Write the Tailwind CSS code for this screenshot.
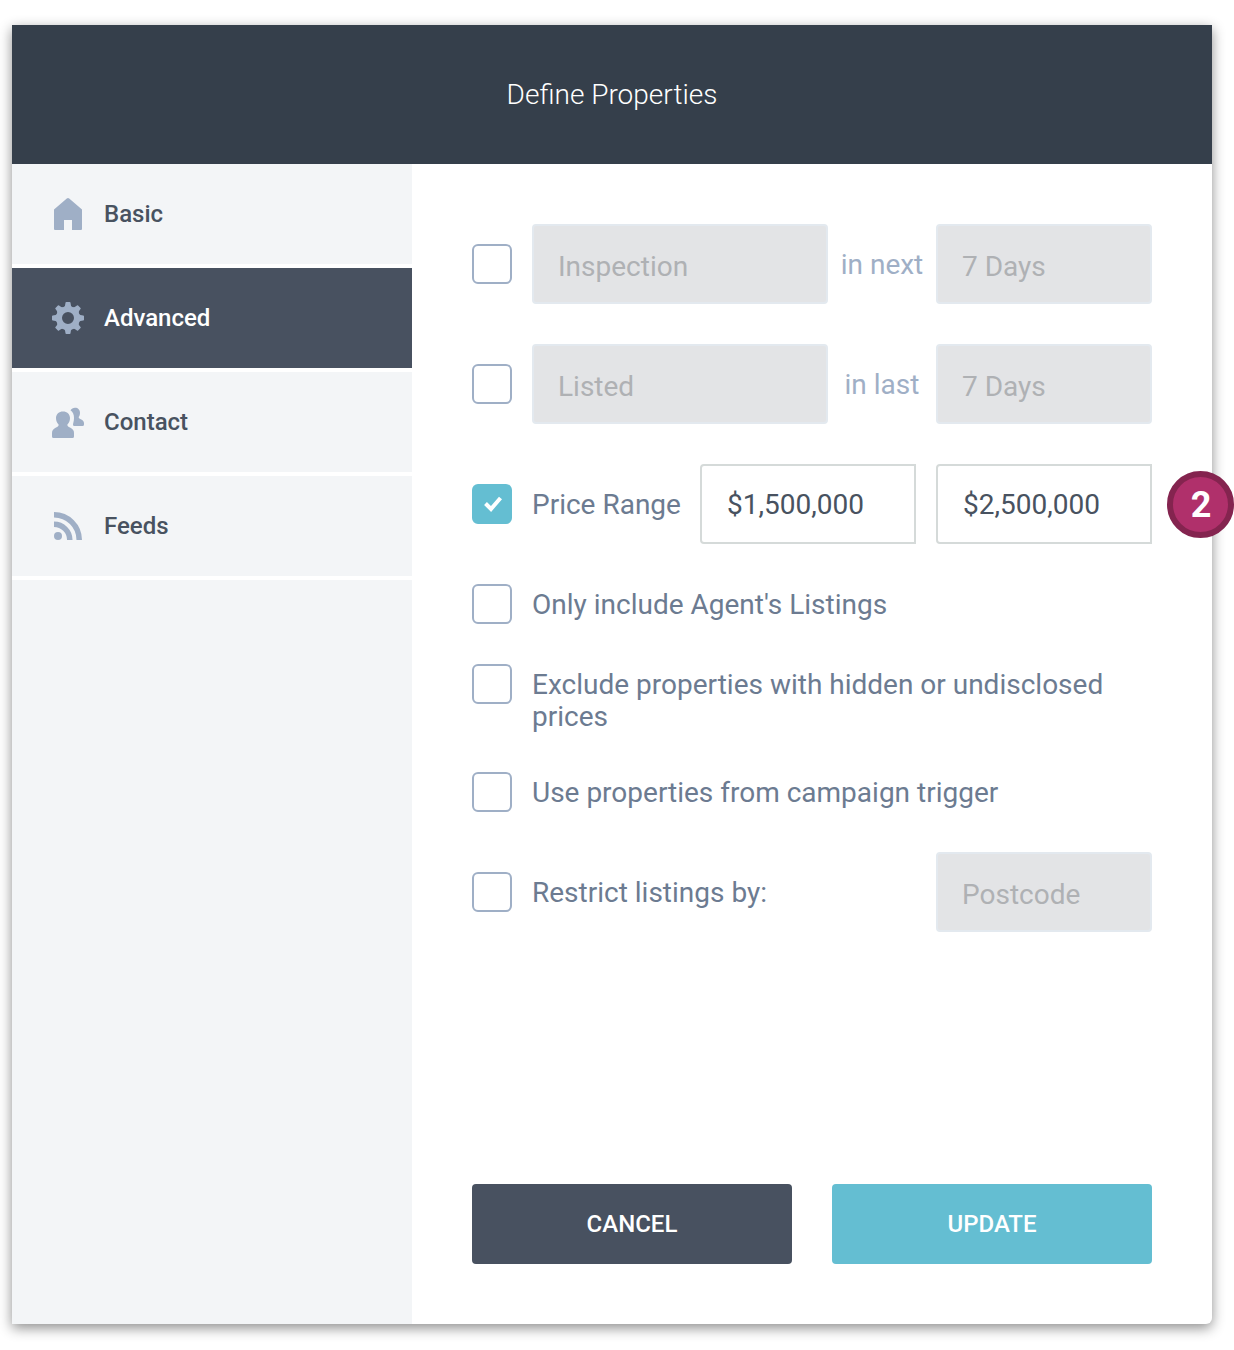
<!DOCTYPE html>
<html lang="en">
<head>
  <meta charset="UTF-8">
  <meta name="viewport" content="width=device-width, initial-scale=1.0">
  <title>Define Properties</title>
  <script src="https://cdn.jsdelivr.net/npm/@tailwindcss/browser@4"></script>
</head>
<body class="bg-white font-['Roboto',sans-serif] antialiased h-[1350px] pl-3 pt-[25px] overflow-hidden">

  <div class="relative w-[1200px] h-[1299px] flex flex-col bg-white rounded-br-md shadow-[0_4px_13px_rgba(0,0,0,0.45)]">
    <header class="h-[139px] shrink-0 bg-[#353f4b] flex items-center justify-center">
      <h1 class="text-[28px] font-light text-white">Define Properties</h1>
    </header>

    <div class="flex flex-1">
      <!-- Sidebar -->
      <nav class="w-[400px] bg-[#f3f5f7] text-2xl font-medium text-[#485260]">
        <a class="h-[104px] border-b-4 border-white flex items-center gap-5 pl-10">
          <svg class="w-8 h-8 text-[#9fafc6]" viewBox="0 0 32 32" fill="currentColor">
            <path d="M16 0Q16.6 0 17.2.6L30 11.5V31Q30 32 29 32H20V22H12V32H3Q2 32 2 31V11.5L14.8.6Q15.4 0 16 0Z"/>
          </svg>
          Basic
        </a>
        <a class="h-[104px] border-b-4 border-white flex items-center gap-5 pl-10 bg-[#485160] text-white">
          <svg class="w-8 h-8 text-[#9fafc6]" viewBox="-16 -16 32 32" fill="none" stroke="currentColor">
            <circle r="9" stroke-width="6"/>
            <g fill="currentColor" stroke="none">
              <path id="tooth" d="M-4.2-10.5Q-2.6-12-2.5-15.2Q-2.5-16-1.7-16H1.7Q2.5-16 2.5-15.2Q2.6-12 4.2-10.5Z"/>
              <use href="#tooth" transform="rotate(45)"/>
              <use href="#tooth" transform="rotate(90)"/>
              <use href="#tooth" transform="rotate(135)"/>
              <use href="#tooth" transform="rotate(180)"/>
              <use href="#tooth" transform="rotate(225)"/>
              <use href="#tooth" transform="rotate(270)"/>
              <use href="#tooth" transform="rotate(315)"/>
            </g>
          </svg>
          Advanced
        </a>
        <a class="h-[104px] border-b-4 border-white flex items-center gap-5 pl-10">
          <svg class="w-8 h-8 text-[#9fafc6]" viewBox="0 0 32 32" fill="currentColor">
            <path d="M11 5.500C15 5.500 18 8.200 18 12C18 15 17 17 15.300 18.700C15.300 20 16.200 20.600 18 21.500C21 23 22 24.500 22 27V30.500Q22 32 20.500 32H1.500Q0 32 0 30.500V27C0 24.500 1 23 4 21.500C5.800 20.600 6.700 20 6.700 18.700C5 17 4 15 4 12C4 8.200 7 5.500 11 5.500Z"/>
            <path d="M18.500 4.300C19.500 2.600 21 1.700 23 1.700C26 1.700 28 3.800 28 6.800C28 8.800 27.500 10 26.700 11C26.700 12.300 27.300 12.600 28.800 13.300C31 14.300 32 15.500 32 17.300V18.500Q32 20 30.500 20H22.300Q21 20 21 18.500C21 17.300 22 15.500 22 12C22 8.600 21 6 18.500 4.300Z"/>
          </svg>
          Contact
        </a>
        <a class="h-[104px] border-b-4 border-white flex items-center gap-5 pl-10">
          <svg class="w-8 h-8 text-[#9fafc6]" viewBox="0 0 32 32" fill="none" stroke="currentColor" stroke-width="5.500">
            <circle cx="6" cy="26" r="4" fill="currentColor" stroke="none"/>
            <path d="M2 14.200A15.800 15.800 0 0 1 17.800 30M2 4.750A25.250 25.250 0 0 1 27.250 30"/>
          </svg>
          Feeds
        </a>
      </nav>

      <!-- Advanced options -->
      <main class="w-[800px] p-[60px] flex flex-col text-[28px] leading-8 text-[#6c7b91]">
        <div class="flex items-center h-20 mb-10">
          <span class="size-10 border-2 border-[#9fafc6] rounded-md mr-5"></span>
          <div class="w-[296px] h-20 border-2 border-[#e3e9ef] rounded bg-[#e3e4e6] text-[#afb1b4] pl-6 pt-1.5 flex items-center">Inspection</div>
          <span class="w-[108px] pt-0.5 text-center text-[#9fafc6]">in next</span>
          <div class="w-[216px] h-20 border-2 border-[#e3e9ef] rounded bg-[#e3e4e6] text-[#afb1b4] pl-6 pt-1.5 flex items-center">7 Days</div>
        </div>

        <div class="flex items-center h-20 mb-10">
          <span class="size-10 border-2 border-[#9fafc6] rounded-md mr-5"></span>
          <div class="w-[296px] h-20 border-2 border-[#e3e9ef] rounded bg-[#e3e4e6] text-[#afb1b4] pl-6 pt-1.5 flex items-center">Listed</div>
          <span class="w-[108px] pt-0.5 text-center text-[#9fafc6]">in last</span>
          <div class="w-[216px] h-20 border-2 border-[#e3e9ef] rounded bg-[#e3e4e6] text-[#afb1b4] pl-6 pt-1.5 flex items-center">7 Days</div>
        </div>

        <div class="flex items-center h-20 mb-10">
          <span class="size-10 bg-[#64bed2] rounded-md mr-5 flex items-center justify-center">
            <svg class="size-10" viewBox="0 0 40 40" fill="none" stroke="#fff" stroke-width="4">
              <path d="M13.500 19.500L19 25L28.500 14"/>
            </svg>
          </span>
          <span class="w-[168px] pt-0.5">Price Range</span>
          <div class="w-[216px] h-20 border-2 border-[#d5dad9] rounded-l text-[#485260] pl-[25px] pt-0.5 flex items-center mr-5">$1,500,000</div>
          <div class="w-[216px] h-20 border-2 border-[#d5dad9] rounded-l text-[#485260] pl-[25px] pt-0.5 flex items-center">$2,500,000</div>
        </div>

        <div class="flex items-center h-10 mb-10">
          <span class="size-10 border-2 border-[#9fafc6] rounded-md mr-5"></span>
          <span class="pt-0.5">Only include Agent's Listings</span>
        </div>

        <div class="flex items-start h-[68px] mb-10">
          <span class="size-10 shrink-0 border-2 border-[#9fafc6] rounded-md mr-5"></span>
          <span class="pt-[5px]">Exclude properties with hidden or undisclosed prices</span>
        </div>

        <div class="flex items-center h-10 mb-10">
          <span class="size-10 border-2 border-[#9fafc6] rounded-md mr-5"></span>
          <span class="pt-0.5">Use properties from campaign trigger</span>
        </div>

        <div class="flex items-center h-20">
          <span class="size-10 border-2 border-[#9fafc6] rounded-md mr-5"></span>
          <span class="pt-0.5">Restrict listings by:</span>
          <div class="w-[216px] h-20 border-2 border-[#e3e9ef] rounded bg-[#e3e4e6] text-[#afb1b4] pl-6 pt-1.5 flex items-center ml-auto">Postcode</div>
        </div>

        <div class="mt-auto flex gap-10 text-2xl font-medium text-white">
          <button class="flex-1 h-20 rounded bg-[#485160]">CANCEL</button>
          <button class="flex-1 h-20 rounded bg-[#64bed2]">UPDATE</button>
        </div>
      </main>
    </div>

    <!-- Step marker -->
    <div class="absolute left-[1155px] top-[446px] size-[67px] rounded-full border-6 border-[#84244f] bg-[#b0306b] text-white text-4xl font-bold flex items-center justify-center pl-px">2</div>
  </div>

</body>
</html>
